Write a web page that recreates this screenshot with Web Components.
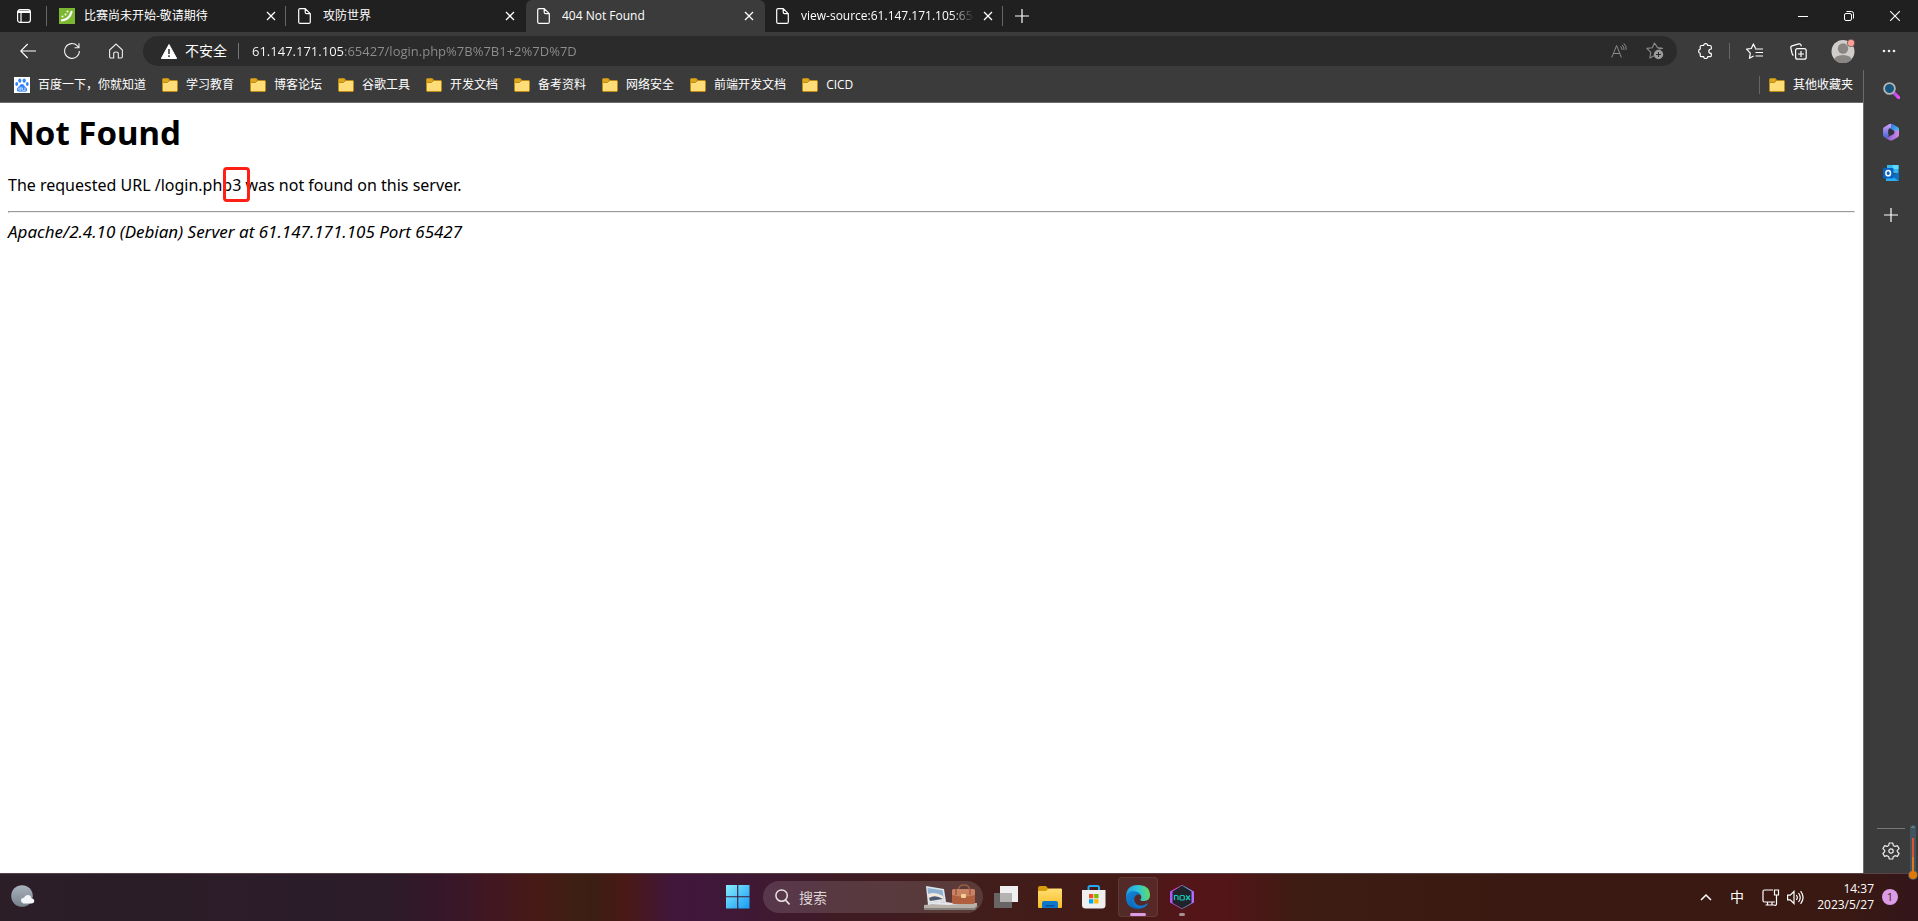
<!DOCTYPE html>
<html lang="zh-CN">
<head>
<meta charset="utf-8">
<title>404 Not Found</title>
<style>
html,body{height:100%;margin:0}
body{font-family:"Open Sans","Noto Sans CJK SC",sans-serif;font-size:12px;color:#fff;background:#fff;overflow:hidden}
</style>
</head>
<body>
<desktop-screen></desktop-screen>
<script>
const ICONS = {
  tabmenu: [16,16,'<g fill="none" stroke="#fff" stroke-width="1.2"><rect x="1.6" y="1.6" width="12.8" height="12.8" rx="2.4"/><path d="M5 5v9.4"/></g><path d="M2 2.6h12V5H2z" fill="#fff"/>'],
  xctf: [16,16,'<path d="M0 0h16v16H0z" fill="#7cb82f"/><path d="M3 12.3q7.500-1 9.500-8.300" fill="none" stroke="#fff" stroke-width="2.300" stroke-linecap="round"/><circle cx="3.500" cy="8.500" r="1" fill="#fff"/><circle cx="6.500" cy="6.500" r="1" fill="#fff"/><circle cx="8.500" cy="3.600" r="1" fill="#fff"/>'],
  page: [13,16,'<path d="M2.200.6h5L12.300 5.700v8.200q0 1.500-1.500 1.500H2.200q-1.500 0-1.500-1.500V2.100q0-1.500 1.500-1.500zM7.200.8v3.400q0 1.500 1.500 1.500h3.400" fill="none" stroke="#fff" stroke-width="1.200"/>'],
  close: [10,10,'<path d="M1 1l8 8M9 1l-8 8" stroke="#fff" stroke-width="1.300"/>'],
  plus: [14,14,'<path d="M7 0v14M0 7h14" stroke="#fff" stroke-width="1.200"/>'],
  min: [10,10,'<path d="M0 5.500h10" stroke="#fff"/>'],
  restore: [10,10,'<rect x=".5" y="2.500" width="7" height="7" rx="1.500" fill="none" stroke="#fff"/><path d="M2.500.5h5q2 0 2 2v5" fill="none" stroke="#fff"/>'],
  winclose: [10,10,'<path d="M0 0l10 10M10 0L0 10" stroke="#fff" stroke-width="1.100"/>'],
  back: [16,16,'<path d="M16 8H.7M7.700 1L.7 8l7 7" fill="none" stroke="#fff" stroke-width="1.100"/>'],
  reload: [16,16,'<path d="M15.400 8A7.400 7.400 0 1 1 13.300 2.800L14.800 4.300M15 .3v4.400h-4.500" fill="none" stroke="#eee" stroke-width="1.100"/>'],
  home: [14,16,'<path d="M.6 7L7 1l6.400 6v6.600q0 1.400-1.400 1.400H9.300V10.500Q9.300 9 7 9t-2.300 1.500V15H2Q.6 15 .6 13.600z" fill="none" stroke="#eee" stroke-width="1.100"/>'],
  warn: [16,15,'<path d="M8 .5L15.700 14.500H.3z" fill="#fff" stroke="#fff" stroke-linejoin="round"/><path d="M8 5v5M8 11.300v1.700" stroke="#2b2b2b" stroke-width="1.500"/>'],
  read: [16,16,'<path d="M.8 14.500L5.600 2.500l4.800 12M2.500 10.500h6.200M9.500 3.500q1.600 1.300 1.600 3.500M11 1.800q2.300 2 2 5M12.800.4q2.800 2.800 2.400 6.300" fill="none" stroke="#8b8b8b"/>'],
  addfav: [18,18,'<path d="M12.500 7l4-.6-5-.8L8.500 1 6.300 5.700.8 6.400l4 4-.9 5.600 4.100-2.200" fill="none" stroke="#8b8b8b" stroke-width="1.100" stroke-linejoin="round"/><circle cx="12.500" cy="12.500" r="4.700" fill="#9b9b9b"/><path d="M12.500 10v5M10 12.500h5" stroke="#2b2b2b"/>'],
  ext: [15,16,'<path d="M3.500 2.500h2.200Q5.700.6 7.700.6t2 1.900H12q1.300 0 1.300 1.300V6q-2.500 0-2.500 2.200t2.500 2.200v2q0 1.300-1.300 1.300H9.700q0 1.800-2 1.800t-2-1.800H3.500q-1.300 0-1.300-1.300v-2.100Q.6 9.800.6 8.200t1.600-2.100V3.800q0-1.300 1.300-1.300z" fill="none" stroke="#fff" stroke-width="1.200" stroke-linejoin="round"/>'],
  favs: [17,16,'<path d="M9.600 5.600L7.400.9 5.300 5.500.6 6.200l3.700 3.900-.9 5.200 4.200-2.400" fill="none" stroke="#fff" stroke-width="1.200" stroke-linejoin="round"/><path d="M9 6h8M9.500 9.500H17M9.500 13H17" stroke="#fff" stroke-width="1.200"/>'],
  collect: [17,17,'<rect x="5.600" y="5.600" width="10.600" height="10.600" rx="2" fill="none" stroke="#fff" stroke-width="1.200"/><path d="M11 8v6M8 11h6M3.500 12.500Q2.500 12 2.100 10.500L.8 5Q.5 3.400 2 2.900l6.800-2Q10.500.5 11 2l.4 1.300" fill="none" stroke="#fff" stroke-width="1.200"/>'],
  avatar: [24,24,'<defs><clipPath id="c"><circle cx="12" cy="12.500" r="11.500"/></clipPath></defs><g clip-path="url(#c)"><path d="M0 0h24v24H0z" fill="#d0cdca"/><circle cx="12" cy="9.500" r="5.200" fill="#8a8683"/><ellipse cx="12" cy="21.500" rx="9" ry="5.500" fill="#8a8683"/></g><circle cx="20" cy="4" r="3.700" fill="#ff9f96" stroke="#3b3b3b" stroke-width=".6"/>'],
  dots: [14,4,'<g fill="#eee"><circle cx="2" cy="2" r="1.300"/><circle cx="7" cy="2" r="1.300"/><circle cx="12" cy="2" r="1.300"/></g>'],
  baidu: [16,16,'<path d="M0 0h16v16H0z" fill="#fff"/><g fill="#3385ff"><ellipse cx="5.800" cy="3.600" rx="1.600" ry="2.200"/><ellipse cx="10.200" cy="3.600" rx="1.600" ry="2.200"/><ellipse cx="2.700" cy="7" rx="1.400" ry="1.900"/><ellipse cx="13.300" cy="7" rx="1.400" ry="1.900"/><path d="M8 7q1.800 0 2.800 2.200 2.800 2 2.400 3.900-.5 2.100-3 1.700-2.200-.4-4.400 0-2.500.4-3-1.700-.4-1.900 2.400-3.900Q6.200 7 8 7z"/></g><path d="M7 9.800v3.400H5.500q-1 0-1-1t1-1H7m1.500-.5v2q0 .8 1 .8H11v-3" fill="none" stroke="#fff" stroke-width=".7"/>'],
  folder: [16,14,'<path d="M.5 1.500q0-1 1-1h4.700l1.300 1.300L6 4.500H.5z" fill="#dba91f" stroke="#bd8b13"/><path d="M.5 4.500h5L7.500 2.500h7q1 0 1 1V12.500q0 1-1 1h-13q-1 0-1-1z" fill="#ffdd78" stroke="#bd8b13"/>'],
  search: [17,17,'<defs><linearGradient id="h"><stop stop-color="#b44cf0"/><stop offset="1" stop-color="#f04af5"/></linearGradient></defs><path d="M11 11l4.700 4.700" stroke="url(#h)" stroke-width="3.200" stroke-linecap="round"/><circle cx="6.500" cy="6.500" r="5.400" fill="#17577d" stroke="#b5b5b5" stroke-width="1.800"/>'],
  m365: [16,18,'<defs><linearGradient id="a" x2="1" y2="1"><stop stop-color="#2b62d9"/><stop offset="1" stop-color="#55d0fa"/></linearGradient><linearGradient id="b" x2="0" y2="1"><stop stop-color="#d7a1f5"/><stop offset="1" stop-color="#4565d8"/></linearGradient><linearGradient id="d"><stop stop-color="#7653d0"/><stop offset="1" stop-color="#cf8be8"/></linearGradient></defs><path d="M6.500 1Q8 0 9.500 1L15 4.300q1 .7 1 2v5L8 6.500Q5 4.500 5.500 1.600z" fill="url(#a)"/><path d="M6.500 1L1 4.200Q0 5 0 6v6q0 1.200 1 2 2.500 1.500 4.500.3V7.500Q5.300 5 8 4.800V1z" fill="url(#b)"/><path d="M1 14q2.500 1.200 4.500 0l5-3q2-2 .5-4.500L16 8v4q0 1.200-1 1.900L9.500 17.200Q8 18 6.500 17.200z" fill="url(#d)"/><path d="M8 5.800l3 2v3L8 12.300l-2.700-1.500V7z" fill="#303045"/>'],
  outlook: [16,16,'<path d="M4 0h11.500v8H4z" fill="#35b8f1"/><path d="M9.500 0h6v4h-6z" fill="#58d9fd"/><path d="M3 4h7v8H3z" fill="#0f6cbd"/><path d="M16 7.500V15q0 1-1 1H4q-1 0-1-1v-3z" fill="#1490df"/><path d="M3 9l13 7H3z" fill="#2bb0f0"/><path d="M8 10l8-2.500V16z" fill="#106ebe"/><rect y="3" width="10.500" height="10.500" rx="1.200" fill="#0a63c2"/><ellipse cx="5.200" cy="8.200" rx="2.300" ry="2.600" fill="none" stroke="#fff" stroke-width="1.500"/>'],
  gear: [18,18,'<g fill="none" stroke="#eee" stroke-width="1.200" stroke-linejoin="round"><path d="M7.300 1h3.400l.6 2.400 1.700 1 2.400-.7 1.700 2.900L15.300 8.400v1.300l1.800 1.800-1.700 2.900-2.400-.7-1.700 1-.6 2.300H7.300l-.6-2.300-1.700-1-2.400.7L.9 11.500 2.700 9.700V8.400L.9 6.600l1.700-2.900 2.400.7 1.700-1z"/><circle cx="9" cy="9" r="2.200"/></g>'],
  thermo: [10,56,'<rect x="2" y="0" width="6" height="48" rx="2" fill="#40535f"/><circle cx="5" cy="50" r="5" fill="#40535f"/><path d="M3.500 2.500Q5 1 6.500 2.500" fill="none" stroke="#8da0aa"/><path d="M4 13h2v20H4z" fill="#e2512c"/><path d="M4 32h2v17H4z" fill="#e2761b"/><circle cx="5" cy="50" r="4" fill="#e07808"/>'],
  weather: [24,22,'<defs><linearGradient id="w" x2="0" y2="1"><stop stop-color="#a9b3be"/><stop offset="1" stop-color="#75818a"/></linearGradient></defs><circle cx="11" cy="11" r="10.800" fill="url(#w)"/><path d="M12 18q-2-.5-2-2.500 0-2.500 3-2.700Q14 9.800 17 10q3 .2 3.500 3.400 2.800.3 2.800 2.600 0 2.200-2.500 2.500H12z" fill="#f3f6f9"/>'],
  windows: [24,24,'<defs><linearGradient id="g" gradientUnits="userSpaceOnUse" x2="24" y2="24"><stop stop-color="#86eefb"/><stop offset="1" stop-color="#1598f4"/></linearGradient></defs><path d="M0 0h11.200v11.200H0zM12.300 0h11.200v11.200H12.300zM0 12.300h11.200v11.200H0zM12.300 12.300h11.200v11.200H12.300z" fill="url(#g)"/>'],
  find: [15,16,'<circle cx="6.600" cy="6.600" r="5.700" fill="none" stroke="#e9e1e2" stroke-width="1.500"/><path d="M10.500 11l4 4.400" stroke="#e9e1e2" stroke-width="1.700"/>'],
  brief: [54,27,'<path d="M0 22h54l-3 4H0z" fill="#85807b"/><path d="M0 21L22 19h31v3L50 24H0z" fill="#b9b2aa"/><path d="M2 2l18 3 2 13L4 21z" fill="#dce6ef"/><path d="M3.500 4l15 2.300 1.500 10L5.300 18.500z" fill="#8fb0d0"/><path d="M4 10q7-3 15 2l1 4.300L5 18.500z" fill="#f5e8dc"/><path d="M5 14q6-4 14 1l-13 2z" fill="#4a5b73"/><path d="M4 20l18-2 13 2-10 1z" fill="#e8e7ea"/><path d="M34 6q1-5 6-5t6 5" fill="none" stroke="#9a5f46" stroke-width="1.500"/><rect x="28" y="5" width="23" height="15" rx="2" fill="#b0603f"/><path d="M28 7q0-2 2-2h19q2 0 2 2v4q-11 3-23 0z" fill="#c98262"/><path d="M32 5v6M46 5v6" stroke="#8b4631"/><rect x="37" y="10" width="5" height="4" rx="1" fill="#f2cf96"/>'],
  taskview: [24,22,'<path d="M0 7h18v15H0z" fill="#686664"/><path d="M6 0h18v16H6z" fill="#f0efef"/><path d="M6 7h12v9H6z" fill="#b5b3b2"/>'],
  explorer: [24,22,'<defs><linearGradient id="e" x2="0" y2="1"><stop stop-color="#ffdf73"/><stop offset="1" stop-color="#f9bd25"/></linearGradient></defs><path d="M0 2q0-2 2-2h6l2.500 3L8 7H0z" fill="#d99a0d"/><path d="M0 5h8l2.500-2.500H23q1 0 1 1V21q0 1-1 1H1q-1 0-1-1z" fill="url(#e)"/><path d="M4 22v-5q0-2 2-2h12q2 0 2 2v5z" fill="#0d78c9"/><path d="M7.500 19h9v1.500h-9z" fill="#0a4f9b"/>'],
  store: [24,24,'<path d="M6.500 6V2.500Q6.500 1 8 1h7.500Q17 1 17 2.500V6" fill="none" stroke="#23a9f2" stroke-width="2"/><path d="M0 5h23.500v15q0 3.500-3.500 3.500H3.500Q0 23.500 0 20z" fill="#efefef"/><path d="M7 9h4.300v4.300H7z" fill="#f25022"/><path d="M12.200 9h4.300v4.300h-4.300z" fill="#7fba00"/><path d="M7 14.200h4.300v4.300H7z" fill="#00a4ef"/><path d="M12.200 14.200h4.300v4.300h-4.300z" fill="#ffb900"/>'],
  edge: [24,24,'<defs><linearGradient id="x" y1=".3" x2="1" y2=".2"><stop stop-color="#219be5"/><stop offset=".5" stop-color="#2fc5d8"/><stop offset="1" stop-color="#67dd55"/></linearGradient><linearGradient id="y" x2="1" y2="1"><stop stop-color="#1489dc"/><stop offset="1" stop-color="#0b529f"/></linearGradient></defs><path d="M0 12Q0 0 12 0t12 10.500q-.4 5.300-5.500 5.500-4.400 0-4.200-1.500Q16 12.700 15 10.500 13 7 8.500 7 2.500 7 0 12z" fill="url(#x)"/><path d="M0 12Q2 5.500 8.300 6.200q5 .5 6.400 4.300-3-2-5.400.5-2.300 2.800-.4 6.400Q11.700 22 17 20.500l4.500-1.700Q17.800 24 12 24 0 23.500 0 12z" fill="url(#y)"/><path d="M9 11q-2 3 0 6.500 3 4.600 8.500 2.800l4.700-2.200q-.7 2.300-3.300 4Q14 24.400 9.500 22 5 18.800 6 14.300 7 11.800 9 11z" fill="#1277c9"/>'],
  nox: [24,24,'<defs><linearGradient id="n"><stop stop-color="#a55cff"/><stop offset=".3" stop-color="#ef4ce8"/><stop offset=".65" stop-color="#52c8f4"/><stop offset="1" stop-color="#c25bff"/></linearGradient></defs><path d="M12 0l12 6.500v11L12 24 0 17.500v-11z" fill="url(#n)"/><path d="M12 .5l9.500 6v11.500L12 23.500 2.500 18V6.500z" fill="#202329"/><path d="M4.500 15v-4.500h2.300q1.200 0 1.200 1.200V15M11 10.500h2.300q1 0 1 1V14q0 1-1 1H11q-1 0-1-1v-2.500q0-1 1-1zM16 10.500l4 4.500M20 10.500L16 15" fill="none" stroke="#16c9b7" stroke-width="1.200"/>'],
  up: [12,8,'<path d="M1 7l5-5 5 5" fill="none" stroke="#fff" stroke-width="1.500"/>'],
  net: [18,17,'<path d="M11 1H2.500Q1 1 1 2.500v9Q1 13 2.500 13H13M5.500 13v2.500M10 13v2.500M3.500 16h9M12.500 1h4v5h-4zM14.500 6v9q0 1.500-2 1.500" fill="none" stroke="#fff" stroke-width="1.200"/>'],
  sound: [17,15,'<path d="M.6 5.200h2.600L7 1.500v12L3.200 9.800H.6zM9.300 5q2 2.500 0 5M11.500 3q3.500 4.500 0 9M13.600 1.200q5 6.300 0 12.600" fill="none" stroke="#fff" stroke-width="1.200"/>']
};
const define = (name, html) => customElements.define(name, class extends HTMLElement {
  constructor() { super(); this.attachShadow({mode:'open'}).innerHTML = html; }
});

customElements.define('ui-icon', class extends HTMLElement {
  connectedCallback() {
    const [w,h,body] = ICONS[this.getAttribute('name')];
    (this.shadowRoot || this.attachShadow({mode:'open'})).innerHTML =
      `<style>:host{display:inline-block;flex:none;line-height:0}svg{display:block}</style><svg width="${w}" height="${h}" viewBox="0 0 ${w} ${h}" aria-hidden="true">${body}</svg>`;
  }
});

customElements.define('icon-button', class extends HTMLElement {
  connectedCallback() {
    (this.shadowRoot || this.attachShadow({mode:'open'})).innerHTML =
      `<style>:host{display:flex;flex:none;width:44px}button{flex:1;display:flex;align-items:center;justify-content:center;border:0;padding:0;background:none}</style>
       <button aria-label="${this.getAttribute('label')}"><ui-icon name="${this.getAttribute('icon')}"></ui-icon></button>`;
  }
});

define('browser-tab', `<style>
:host{display:flex;align-items:center;flex:0 1 239px;min-width:0;box-sizing:border-box;height:32px;padding:0 10px 0 11px;border-right:1px solid transparent;
 background:linear-gradient(#666,#666) right 6px/1px 20px no-repeat}
:host([active]){background:#3b3b3b;border-radius:6px 6px 0 0}
:host([before]){background:none}
.tab{display:flex;align-items:center;flex:1;min-width:0;gap:9px;border:0;background:none;padding:0;color:#fff;font:inherit;text-align:left}
.icon{width:16px;display:flex}
.t{flex:1;white-space:nowrap;overflow:hidden;line-height:18px}
:host([long]) .t{-webkit-mask-image:linear-gradient(90deg,#000 calc(100% - 24px),transparent)}
icon-button{width:10px;margin-left:9px}
</style><button class="tab" role="tab"><span class="icon"><slot name="icon"></slot></span><span class="t"><slot></slot></span></button><icon-button icon="close" label="关闭标签页"></icon-button>`);

define('tab-strip', `<style>
:host{display:flex;height:32px;background:#202020}
.menu{width:47px;border-right:1px solid transparent;background:linear-gradient(#666,#666) right 6px/1px 20px no-repeat}
nav{display:flex;flex:1;min-width:0}
.new{width:36px}.win{display:flex}.win icon-button{width:46px}
</style><icon-button class="menu" icon="tabmenu" label="标签操作菜单"></icon-button>
<nav role="tablist">
<browser-tab><ui-icon slot="icon" name="xctf"></ui-icon>比赛尚未开始-敬请期待</browser-tab>
<browser-tab before><ui-icon slot="icon" name="page"></ui-icon>攻防世界</browser-tab>
<browser-tab active><ui-icon slot="icon" name="page"></ui-icon>404 Not Found</browser-tab>
<browser-tab long><ui-icon slot="icon" name="page"></ui-icon>view-source:61.147.171.105:65427</browser-tab>
<icon-button class="new" icon="plus" label="新建标签页"></icon-button></nav>
<div class="win"><icon-button icon="min" label="最小化"></icon-button><icon-button icon="restore" label="还原"></icon-button><icon-button icon="winclose" label="关闭"></icon-button></div>`);

define('address-bar', `<style>
:host{display:flex;align-items:center;flex:1;min-width:0;height:30px;border-radius:15px;background:#2b2b2b;padding-left:18px;padding-right:4px;box-sizing:border-box;margin:0 4px 0 5px;font-size:14px}
label{white-space:nowrap;margin:0 11px 0 8px;line-height:20px}
i{width:1px;height:16px;background:#777;margin-right:13px}
input{flex:1;min-width:0;border:0;padding:0;height:20px;font:inherit;font-size:13px;color:transparent;outline:0;
 background:linear-gradient(90deg,#fff 92px,#8e8e8e 0);-webkit-background-clip:text;background-clip:text}
icon-button{width:36px}
</style><ui-icon name="warn"></ui-icon><label for="u">不安全</label><i></i><input id="u" value="61.147.171.105:65427/login.php%7B%7B1+2%7D%7D" spellcheck="false">
<icon-button icon="read" label="大声朗读"></icon-button><icon-button icon="addfav" label="添加到收藏夹"></icon-button>`);

define('tool-bar', `<style>
:host{display:flex;align-items:center;height:38px;padding:0 6px;background:#3b3b3b}
.e{width:48px}.d{width:1px;height:16px;background:#666;margin-right:2px}
.l{width:46px}
</style><icon-button icon="back" label="返回"></icon-button><icon-button icon="reload" label="刷新"></icon-button><icon-button icon="home" label="主页"></icon-button>
<address-bar></address-bar><icon-button class="e" icon="ext" label="扩展"></icon-button><span class="d"></span><icon-button icon="favs" label="收藏夹"></icon-button><icon-button icon="collect" label="集锦"></icon-button><icon-button class="l" icon="avatar" label="个人资料"></icon-button><icon-button class="l" icon="dots" label="设置及其他"></icon-button>`);

define('bookmark-link', `<style>
:host{display:block;flex:none}a{display:flex;align-items:center;gap:8px;color:#fff;text-decoration:none;line-height:18px;white-space:nowrap}
</style><a href="#"><slot name="icon"><ui-icon name="folder"></ui-icon></slot><span><slot></slot></span></a>`);

define('bookmarks-bar', `<style>
:host{display:flex;align-items:center;gap:16px;height:29px;padding:0 10px 3px 14px;background:#3b3b3b;border-bottom:1px solid #6b6b6b}
.o{margin-left:auto;border-left:1px solid #666;padding-left:9px}
</style><bookmark-link><ui-icon slot="icon" name="baidu"></ui-icon>百度一下，你就知道</bookmark-link>
<bookmark-link>学习教育</bookmark-link><bookmark-link>博客论坛</bookmark-link><bookmark-link>谷歌工具</bookmark-link><bookmark-link>开发文档</bookmark-link><bookmark-link>备考资料</bookmark-link><bookmark-link>网络安全</bookmark-link><bookmark-link>前端开发文档</bookmark-link><bookmark-link>CICD</bookmark-link><bookmark-link class="o">其他收藏夹</bookmark-link>`);

define('error-page', `<style>
:host{display:block;flex:1;background:#fff;color:#000;padding:9px 8px;font:16px/21px "Noto Sans",sans-serif}
h1{font-size:33px;line-height:42px;margin:0 0 21px}p{margin:0 0 15px}hr{margin:8px 0}
address{font-size:17px}
.mark{position:relative}.mark::after{content:"";position:absolute;top:-7px;bottom:-6px;left:-9px;right:-9px;border:3px solid #ff1f14;border-radius:4px}
</style><h1>Not Found</h1><p>The requested URL /login.php<span class="mark">3</span> was not found on this server.</p><hr><address>Apache/2.4.10 (Debian) Server at 61.147.171.105 Port 65427</address>`);

define('side-bar', `<style>
:host{display:flex;flex-direction:column;align-items:center;flex:none;box-sizing:border-box;width:55px;background:#3b3b3b;border-left:1px solid #6b6b6b;position:relative}
icon-button{height:41px}.s{margin-top:auto;height:44px;width:28px;border-top:1px solid #777}
.t{position:absolute;right:0;bottom:-8px;z-index:2}
</style><icon-button icon="search" label="搜索"></icon-button><icon-button icon="m365" label="Microsoft 365"></icon-button><icon-button icon="outlook" label="Outlook"></icon-button><icon-button style="height:44px" icon="plus" label="自定义"></icon-button>
<icon-button class="s" icon="gear" label="设置"></icon-button><ui-icon class="t" name="thermo"></ui-icon>`);

define('task-button', `<style>
:host{display:flex;position:relative;width:44px;height:40px;justify-content:center}
button{width:40px;border:0;padding:0;background:none;display:flex;align-items:center;justify-content:center;border-radius:4px}
:host([active]) button{background:#ffffff12;box-shadow:inset 0 0 0 1px #ffffff14}
:host([open])::after{content:"";position:absolute;bottom:1px;width:6px;height:3px;border-radius:2px;background:#a59292}
:host([active])::after{width:16px;background:#df9be3}
</style><button><slot></slot></button>`);

define('task-bar', `<style>
:host{display:grid;grid-template-columns:1fr auto 1fr;align-items:center;height:48px;box-shadow:inset 0 1px #5a4145;
 background:linear-gradient(90deg,#2b1e27 0,#2c1c2a 20%,#36172a 23%,#431720 26%,#471a16 28%,#3e1f12 30%,#3b1e14 31%,#4a1914 32.5%,#41163a 35%,#3f183a 37%,#3f1b24 44%,#411d1b 50%,#431b17 58%,#541519 62%,#521518 64%,#3c1c13 68%,#3a1912 80%,#391912 96%,#34161a 100%)}
.w{margin-left:11px;border:0;padding:0;background:none;justify-self:start}
.c{display:flex;align-items:center;padding-left:2px}
form{display:flex;align-items:center;width:220px;height:32px;box-sizing:border-box;margin:0 1px 0 3px;border-radius:16px;background:#ffffff22;padding:0 5px 0 12px}
input{flex:1;min-width:0;border:0;background:none;padding:0;margin-left:9px;font:inherit;font-size:14px;color:#fff;outline:0}
input::placeholder{color:#ded3d5;opacity:1}
.r{display:flex;align-items:center;justify-self:end;padding-right:20px}
.n{font-size:14px;width:14px;margin:0 18px;line-height:20px}
.t{width:70px;text-align:right;line-height:16px}
b{width:16px;height:16px;line-height:16px;margin-left:8px;border-radius:50%;background:#db9be6;color:#422;font-weight:400;font-size:11px;text-align:center}
ui-icon+ui-icon{margin-left:7px}
</style><button class="w" aria-label="天气"><ui-icon name="weather"></ui-icon></button>
<div class="c"><task-button><ui-icon name="windows"></ui-icon></task-button>
<form><ui-icon name="find"></ui-icon><input aria-label="搜索" placeholder="搜索"><ui-icon name="brief"></ui-icon></form>
<task-button><ui-icon name="taskview"></ui-icon></task-button><task-button><ui-icon name="explorer"></ui-icon></task-button><task-button><ui-icon name="store"></ui-icon></task-button><task-button open active><ui-icon name="edge"></ui-icon></task-button><task-button open><ui-icon name="nox"></ui-icon></task-button></div>
<div class="r"><ui-icon name="up"></ui-icon><span class="n">中</span><ui-icon name="net"></ui-icon><ui-icon name="sound"></ui-icon><div class="t">14:37<br>2023/5/27</div><b>1</b></div>`);

define('desktop-screen', `<style>
:host{display:flex;flex-direction:column;height:100vh}
.m{display:flex;flex:1;min-height:0}
.p{display:flex;flex-direction:column;flex:1;min-width:0}
</style><tab-strip></tab-strip><tool-bar></tool-bar>
<div class="m"><div class="p"><bookmarks-bar></bookmarks-bar><error-page></error-page></div><side-bar></side-bar></div><task-bar></task-bar>`);
</script>
</body>
</html>
